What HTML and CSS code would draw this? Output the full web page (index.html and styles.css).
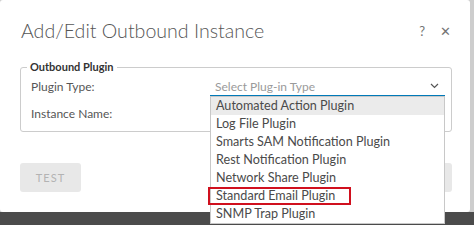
FILE: index.html
```html
<!DOCTYPE html>
<html lang="en">
<head>
    <meta charset="UTF-8">
    <meta name="viewport" content="width=device-width, initial-scale=1.0">
    <title>Add/Edit Outbound Instance</title>
    <link rel="stylesheet" href="styles.css">
</head>
<body>
    <div class="modal">
        <div class="modal-header">
            <h3 class="modal-title">Add/Edit Outbound Instance</h3>
            <div class="header-actions">
                <span class="help">?</span>
                <span class="close">&#x2715;</span>
            </div>
        </div>
        <fieldset class="plugin-group">
            <legend>Outbound Plugin</legend>
            <div class="form-row">
                <label>Plugin Type:</label>
                <div class="select-wrap">
                    <div class="select">
                        <span class="placeholder">Select Plug-in Type</span>
                        <svg class="chevron" width="9" height="6" viewBox="0 0 9 6">
                            <path d="M1 1 L4.5 4.5 L8 1" fill="none" stroke="#555" stroke-width="1.2"/>
                        </svg>
                    </div>
                    <ul class="options">
                        <li class="active">Automated Action Plugin</li>
                        <li>Log File Plugin</li>
                        <li>Smarts SAM Notification Plugin</li>
                        <li>Rest Notification Plugin</li>
                        <li>Network Share Plugin</li>
                        <li class="marked">Standard Email Plugin</li>
                        <li>SNMP Trap Plugin</li>
                    </ul>
                </div>
            </div>
            <div class="form-row">
                <label>Instance Name:</label>
                <div></div>
            </div>
        </fieldset>
        <div class="modal-footer">
            <button class="btn" disabled>TEST</button>
            <button class="btn btn-save" disabled>SAVE</button>
        </div>
    </div>
</body>
</html>
```

FILE: styles.css
```css
/* Page */
body {
    margin: 0;
    width: 474px;
    height: 225px;
    overflow: hidden;
    font-family: 'Lato', 'Open Sans', sans-serif;
    background: linear-gradient(to bottom, #cdcdcd 0, #cdcdcd 212px, #4b4b4b 212px);
}

/* Modal */
.modal {
    width: 470px;
    height: 212px;
    background: #ffffff;
    border-radius: 3px;
    box-sizing: border-box;
    padding: 0 18px 0 20px;
    position: relative;
}

.modal-header {
    display: flex;
    align-items: center;
    justify-content: space-between;
    height: 61px;
}

.modal-title {
    margin: 0 0 0 1px;
    font-size: 19.6px;
    font-weight: 300;
    color: #565656;
}

.header-actions {
    display: flex;
    align-items: center;
    gap: 15px;
    color: #747474;
    font-size: 13px;
    padding-right: 1px;
    margin-top: 1px;
}

.close {
    font-size: 13px;
}

/* Fieldset */
.plugin-group {
    margin: 0;
    width: 432px;
    box-sizing: border-box;
    padding: 0 6px 4px 10px;
    border: 1px solid #cccccc;
    border-radius: 3px;
}

.plugin-group legend {
    margin-left: -4px;
    padding: 0 3px;
    font-size: 11px;
    line-height: 12px;
    font-weight: 700;
    color: #333333;
}

.form-row {
    display: grid;
    grid-template-columns: 179px 235px;
    align-items: center;
    height: 27px;
}

.form-row label {
    font-size: 12px;
    color: #565656;
}

/* Select */
.select-wrap {
    position: relative;
}

.select {
    display: flex;
    align-items: center;
    justify-content: space-between;
    height: 17px;
    padding: 0 6px 0 5px;
    border-bottom: 1px solid #0079b8;
}

.placeholder {
    font-size: 12px;
    color: #9a9a9a;
}

.options {
    position: absolute;
    top: 18px;
    left: 0;
    right: 0;
    margin: 0;
    padding: 0;
    list-style: none;
    background: #ffffff;
    border: 1px solid #c8c8c8;
    z-index: 2;
}

.options li {
    height: 18px;
    line-height: 18px;
    padding-left: 5px;
    font-size: 12.6px;
    color: #4a4a4a;
}

.options li.active {
    background: #ebebeb;
}

.options li.marked {
    margin-left: -3px;
    width: 133px;
    padding-left: 6px;
    border: 2px solid #d0101e;
    height: 14px;
    line-height: 14px;
}

/* Footer */
.modal-footer {
    display: flex;
    justify-content: space-between;
    width: 432px;
    margin-top: 31px;
}

.btn {
    height: 29px;
    width: 61px;
    padding: 0;
    border: none;
    border-radius: 3px;
    background: #e8e8e8;
    color: #b3b3b3;
    font-family: inherit;
    font-size: 11px;
    letter-spacing: 1px;
}

.btn-save {
    width: 80px;
}
```
